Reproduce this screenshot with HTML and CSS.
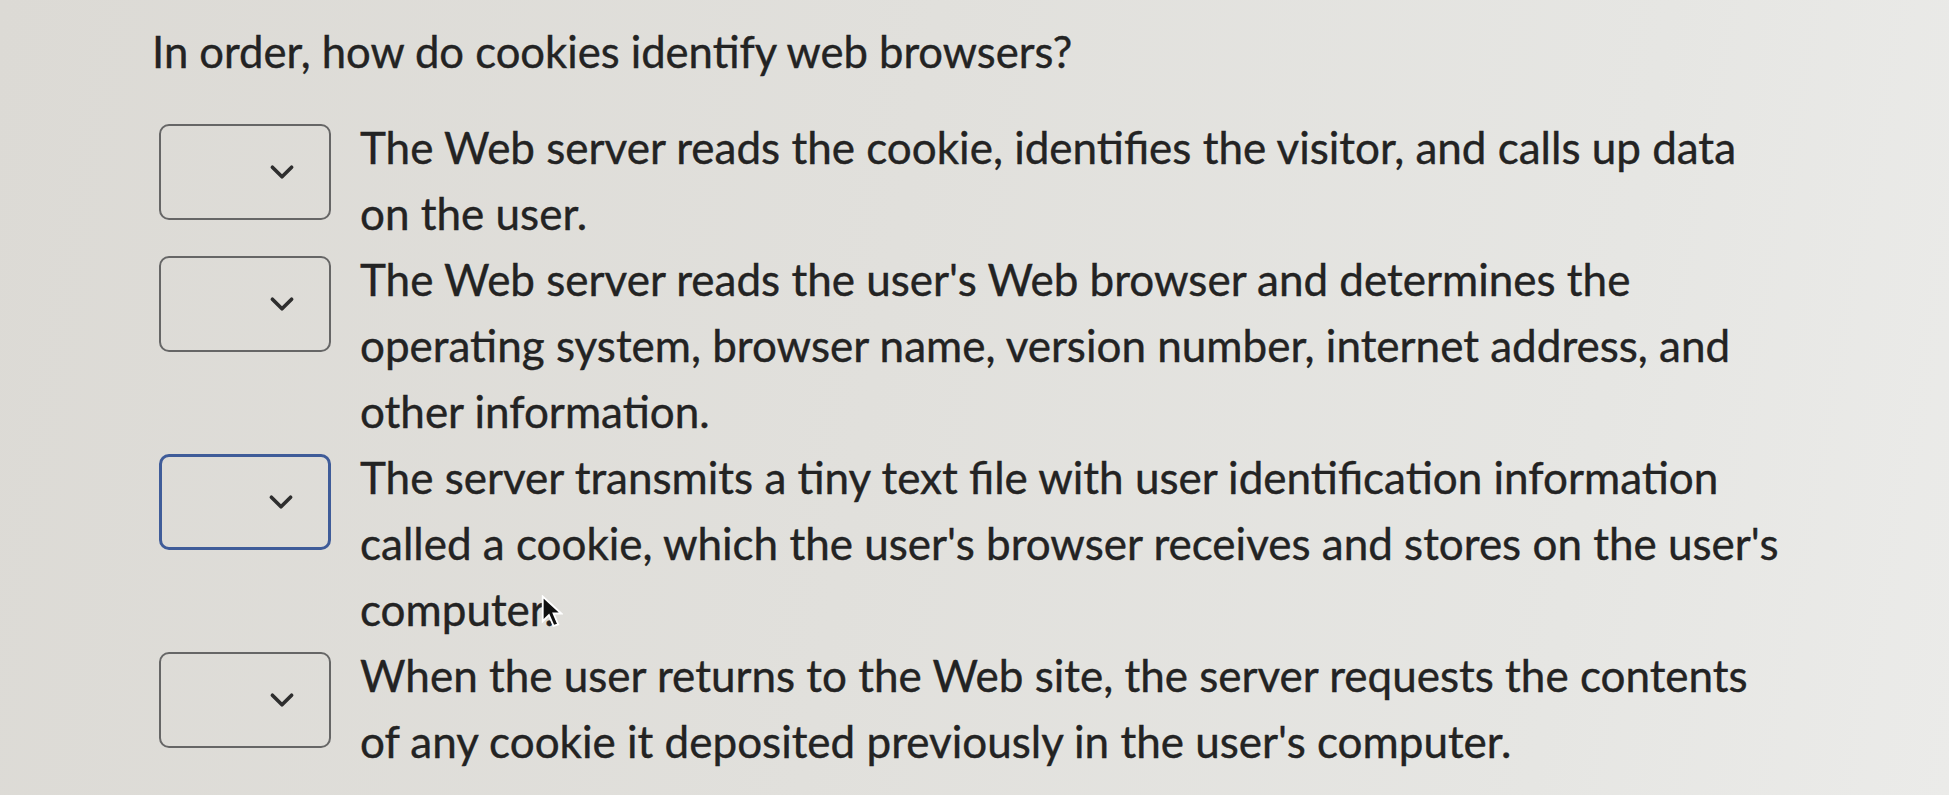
FILE: index.html
```html
<!DOCTYPE html>
<html lang="en">
<head>
  <meta charset="UTF-8" />
  <meta name="viewport" content="width=device-width, initial-scale=1.0"/>
  <title>Ordering question</title>
  <link rel="stylesheet" href="styles.css">
</head>
<body>
  <div class="question">
    <h1 class="prompt">In order, how do cookies identify web browsers?</h1>

    <div class="steps">
      <div class="step">
        <div class="picker">
          <svg class="chevron" viewBox="0 0 16 10"><path d="M2 2 L8 8 L14 2"/></svg>
        </div>
        <p class="step-text">The Web server reads the cookie, identifies the visitor, and calls up data<br>on the user.</p>
      </div>

      <div class="step">
        <div class="picker">
          <svg class="chevron" viewBox="0 0 16 10"><path d="M2 2 L8 8 L14 2"/></svg>
        </div>
        <p class="step-text">The Web server reads the user's Web browser and determines the<br>operating system, browser name, version number, internet address, and<br>other information.</p>
      </div>

      <div class="step">
        <div class="picker focused">
          <svg class="chevron" viewBox="0 0 16 10"><path d="M2 2 L8 8 L14 2"/></svg>
        </div>
        <p class="step-text">The server transmits a tiny text file with user identification information<br>called a cookie, which the user's browser receives and stores on the user's<br>computer<span class="cursor-spot">.<svg class="cursor" viewBox="0 0 14 22"><path d="M1 1 L1 17 L5 13 L8 20 L11 19 L8 12 L13 12 Z"/></svg></span></p>
      </div>

      <div class="step">
        <div class="picker">
          <svg class="chevron" viewBox="0 0 16 10"><path d="M2 2 L8 8 L14 2"/></svg>
        </div>
        <p class="step-text">When the user returns to the Web site, the server requests the contents<br>of any cookie it deposited previously in the user's computer.</p>
      </div>
    </div>
  </div>
</body>
</html>
```

FILE: styles.css
```css
body {
  margin: 0;
  height: 795px;
  overflow: hidden;
  font-family: Lato, "Liberation Sans", sans-serif;
  color: #232323;
  background: linear-gradient(100deg, #dcdad5 0%, #e1e0dc 45%, #e6e6e3 80%, #ebebe9 100%);
}

.question {
  padding: 21px 0 0 152px;
}

.prompt {
  margin: 0;
  font-size: 43.6px;
  font-weight: 400;
  line-height: 60px;
  -webkit-text-stroke: 0.4px #232323;
}

.steps {
  margin-top: 33px;
  padding-left: 7px;
}

.step {
  display: flex;
  align-items: flex-start;
  gap: 29px;
}

.picker {
  flex: none;
  width: 172px;
  height: 96px;
  margin-top: 10px;
  border: 2px solid #666;
  border-radius: 10px;
  display: flex;
  align-items: center;
  justify-content: flex-end;
  padding-right: 34px;
  box-sizing: border-box;
}

.picker.focused {
  border: 3px solid #3f5c99;
}

.chevron {
  width: 26px;
  height: 16px;
  fill: none;
  stroke: #2e2e2e;
  stroke-width: 2.3;
  stroke-linecap: round;
  stroke-linejoin: round;
}

.step-text {
  margin: 0;
  font-size: 44px;
  line-height: 66px;
  white-space: nowrap;
  -webkit-text-stroke: 0.4px #232323;
}

.cursor-spot {
  position: relative;
}

.cursor {
  position: absolute;
  left: -3px;
  top: 12px;
  width: 22px;
  height: 34px;
  fill: #111;
  stroke: #fff;
  stroke-width: 1.2;
}
```
